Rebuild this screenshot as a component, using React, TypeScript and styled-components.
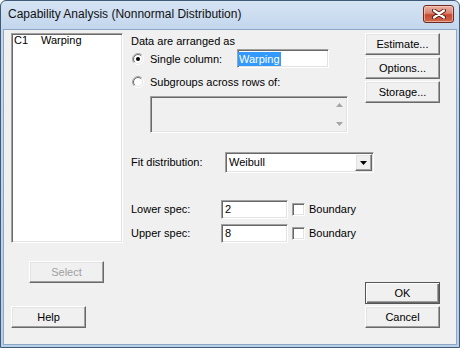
import React from 'react';
import styled, { createGlobalStyle, css } from 'styled-components';

const Global = createGlobalStyle`
  html, body { margin: 0; padding: 0; background: #ffffff; }
  body { font-family: "Liberation Sans", Arial, sans-serif; font-size: 11px; color: #000; }
  * { box-sizing: border-box; }
`;

const sunken = css`
  border: 1px solid;
  border-color: #a0a0a0 #ffffff #ffffff #a0a0a0;
  box-shadow: inset 1px 1px 0 #696969, inset -1px -1px 0 #e3e3e3;
`;

const raised = css`
  border: 1px solid;
  border-color: #ffffff #696969 #696969 #ffffff;
  box-shadow: inset -1px -1px 0 #a0a0a0, inset 1px 1px 0 #e3e3e3;
  background: #f0f0f0;
`;

const Window = styled.div`
  width: 460px;
  height: 348px;
  display: flex;
  flex-direction: column;
  border: 1px solid #3d5a78;
  border-radius: 6px 6px 0 0;
  background: linear-gradient(#d6e4f4, #c3d6ed 28px, #b9cee9);
  overflow: hidden;
`;

const TitleBar = styled.div`
  height: 28px;
  flex: none;
  display: flex;
  align-items: center;
  justify-content: space-between;
  padding: 0 5px 2px 7px;
`;

const Title = styled.div`
  font-family: "Liberation Sans", Arial, sans-serif;
  font-size: 12px;
  color: #111;
  line-height: 15px;
`;

const CloseButton = styled.div`
  width: 31px;
  height: 18px;
  border: 1px solid #6e2a1e;
  border-radius: 3px;
  background: linear-gradient(#eab1a4 0%, #d98472 45%, #c5482f 55%, #cf6a4f 100%);
  box-shadow: inset 0 0 0 1px rgba(255, 220, 210, 0.55);
  display: flex;
  align-items: center;
  justify-content: center;
`;

const Frame = styled.div`
  flex: 1;
  min-height: 0;
  display: flex;
  padding: 0 2px 2px 2px;
`;

const Client = styled.div`
  flex: 1;
  min-width: 0;
  display: flex;
  flex-direction: column;
  background: #f0f0f0;
  border: 1px solid #8da7c5;
  padding: 3px 16px 0 7px;
`;

const TopRow = styled.div`
  display: flex;
  align-items: flex-start;
  height: 210px;
`;

const ListBox = styled.div`
  ${sunken};
  background: #ffffff;
  width: 112px;
  height: 210px;
  flex: none;
  padding: 0 2px;
`;

const ListItem = styled.div`
  display: flex;
  line-height: 13px;
`;

const ColName = styled.span`
  width: 27px;
`;

const Middle = styled.div`
  flex: 1;
  min-width: 0;
  margin-left: 8px;
  display: flex;
  flex-direction: column;
`;

const GroupLabel = styled.div`
  line-height: 13px;
  margin-top: 2px;
`;

const Row = styled.div<{ $h: number; $mt: number }>`
  display: flex;
  align-items: center;
  height: ${(p) => p.$h}px;
  margin-top: ${(p) => p.$mt}px;
  white-space: nowrap;
`;

const RadioOption = styled.div<{ $w?: number }>`
  display: flex;
  align-items: center;
  gap: 6px;
  padding-left: 1px;
  flex: none;
  width: ${(p) => (p.$w ? `${p.$w}px` : 'auto')};
`;

const TextField = styled.div<{ $w: number; $h?: number; $pl?: number }>`
  ${sunken};
  background: #ffffff;
  flex: none;
  width: ${(p) => p.$w}px;
  height: ${(p) => p.$h ?? 19}px;
  display: flex;
  align-items: center;
  padding-left: ${(p) => p.$pl ?? 3}px;
  line-height: 13px;
`;

const Selected = styled.span`
  background: #3399ff;
  color: #ffffff;
  height: 14px;
  line-height: 14px;
  padding: 0 1px;
`;

const MultiBox = styled.div`
  ${sunken};
  background: #f0f0f0;
  width: 198px;
  height: 37px;
  flex: none;
  margin: 8px 0 0 19px;
  display: flex;
  flex-direction: column;
  align-items: flex-end;
  justify-content: space-between;
  padding: 6px 4px 6px 0;
`;

const FieldLabel = styled.div<{ $w: number }>`
  width: ${(p) => p.$w}px;
  flex: none;
  line-height: 13px;
`;

const Combo = styled.div`
  ${sunken};
  background: #ffffff;
  width: 149px;
  height: 21px;
  flex: none;
  display: flex;
  align-items: stretch;
  padding: 1px 1px 1px 3px;
`;

const ComboText = styled.div`
  flex: 1;
  display: flex;
  align-items: center;
  line-height: 13px;
`;

const DropButton = styled.div`
  ${raised};
  width: 17px;
  display: flex;
  align-items: center;
  justify-content: center;
`;

const CheckBox = styled.div`
  ${sunken};
  background: #ffffff;
  width: 13px;
  height: 13px;
  flex: none;
  margin-left: 4px;
`;

const CheckText = styled.span`
  margin-left: 4px;
  line-height: 13px;
`;

const ButtonColumn = styled.div`
  display: flex;
  flex-direction: column;
  gap: 2px;
  flex: none;
`;

const Button = styled.div<{ $disabled?: boolean; $default?: boolean }>`
  ${raised};
  width: 75px;
  height: 22px;
  display: flex;
  align-items: center;
  justify-content: center;
  line-height: 13px;
  color: ${(p) => (p.$disabled ? '#a0a0a0' : '#000')};
  ${(p) =>
    p.$default &&
    css`
      border: 1px solid #555555;
      box-shadow: inset 1px 1px 0 #ffffff, inset -1px -1px 0 #696969, inset -2px -2px 0 #a0a0a0;
    `}
`;

const BottomRow = styled.div`
  display: flex;
  justify-content: space-between;
  align-items: flex-start;
`;

const BottomLeft = styled.div`
  display: flex;
  flex-direction: column;
  align-items: flex-start;
`;

const SelectWrap = styled.div`
  margin: 18px 0 0 18px;
`;

const HelpWrap = styled.div`
  margin-top: 23px;
`;

const BottomRight = styled.div`
  display: flex;
  flex-direction: column;
  gap: 2px;
  margin-top: 39px;
`;

const Radio: React.FC<{ checked?: boolean }> = ({ checked }) => {
  const arc = (r: number) => {
    const d = r * 0.7071;
    const bl = `${6 - d} ${6 + d}`;
    const tr = `${6 + d} ${6 - d}`;
    return {
      tl: `M ${bl} A ${r} ${r} 0 0 1 ${tr}`,
      br: `M ${tr} A ${r} ${r} 0 0 1 ${bl}`,
    };
  };
  const o = arc(5.5);
  const i = arc(4.5);
  return (
    <svg width="12" height="12" viewBox="0 0 12 12" style={{ flex: 'none' }}>
      <circle cx="6" cy="6" r="5" fill="#ffffff" />
      <path d={o.tl} stroke="#a0a0a0" strokeWidth="1" fill="none" />
      <path d={o.br} stroke="#ffffff" strokeWidth="1" fill="none" />
      <path d={i.tl} stroke="#696969" strokeWidth="1" fill="none" />
      <path d={i.br} stroke="#e3e3e3" strokeWidth="1" fill="none" />
      {checked && <circle cx="6" cy="6" r="2" fill="#000" />}
    </svg>
  );
};

const Arrow: React.FC<{ up?: boolean; color?: string }> = ({ up, color = '#a6a6a6' }) => (
  <svg width="7" height="4" viewBox="0 0 7 4">
    {up ? <polygon points="3.5,0 7,4 0,4" fill={color} /> : <polygon points="0,0 7,0 3.5,4" fill={color} />}
  </svg>
);

export default function App() {
  return (
    <>
      <Global />
      <Window>
        <TitleBar>
          <Title>Capability Analysis (Nonnormal Distribution)</Title>
          <CloseButton>
            <svg width="14" height="10" viewBox="0 0 14 10">
              <path d="M2 1.5 L12 8.5 M12 1.5 L2 8.5" stroke="#5a1a10" strokeWidth="4" strokeLinecap="round" />
              <path d="M2 1.5 L12 8.5 M12 1.5 L2 8.5" stroke="#ffffff" strokeWidth="2.2" strokeLinecap="round" />
            </svg>
          </CloseButton>
        </TitleBar>
        <Frame>
          <Client>
            <TopRow>
              <ListBox>
                <ListItem>
                  <ColName>C1</ColName>
                  <span>Warping</span>
                </ListItem>
              </ListBox>
              <Middle>
                <GroupLabel>Data are arranged as</GroupLabel>
                <Row $h={19} $mt={1}>
                  <RadioOption $w={106}>
                    <Radio checked />
                    <span>Single column:</span>
                  </RadioOption>
                  <TextField $w={92} $pl={0}>
                    <Selected>Warping</Selected>
                  </TextField>
                </Row>
                <Row $h={13} $mt={7}>
                  <RadioOption>
                    <Radio />
                    <span>Subgroups across rows of:</span>
                  </RadioOption>
                </Row>
                <MultiBox>
                  <Arrow up />
                  <Arrow />
                </MultiBox>
                <Row $h={21} $mt={19}>
                  <FieldLabel $w={94}>Fit distribution:</FieldLabel>
                  <Combo>
                    <ComboText>Weibull</ComboText>
                    <DropButton>
                      <Arrow color="#000" />
                    </DropButton>
                  </Combo>
                </Row>
                <Row $h={19} $mt={27}>
                  <FieldLabel $w={90}>Lower spec:</FieldLabel>
                  <TextField $w={67}>2</TextField>
                  <CheckBox />
                  <CheckText>Boundary</CheckText>
                </Row>
                <Row $h={19} $mt={5}>
                  <FieldLabel $w={90}>Upper spec:</FieldLabel>
                  <TextField $w={67}>8</TextField>
                  <CheckBox />
                  <CheckText>Boundary</CheckText>
                </Row>
              </Middle>
              <ButtonColumn>
                <Button>Estimate...</Button>
                <Button>Options...</Button>
                <Button>Storage...</Button>
              </ButtonColumn>
            </TopRow>
            <BottomRow>
              <BottomLeft>
                <SelectWrap>
                  <Button $disabled>Select</Button>
                </SelectWrap>
                <HelpWrap>
                  <Button>Help</Button>
                </HelpWrap>
              </BottomLeft>
              <BottomRight>
                <Button $default>OK</Button>
                <Button>Cancel</Button>
              </BottomRight>
            </BottomRow>
          </Client>
        </Frame>
      </Window>
    </>
  );
}
